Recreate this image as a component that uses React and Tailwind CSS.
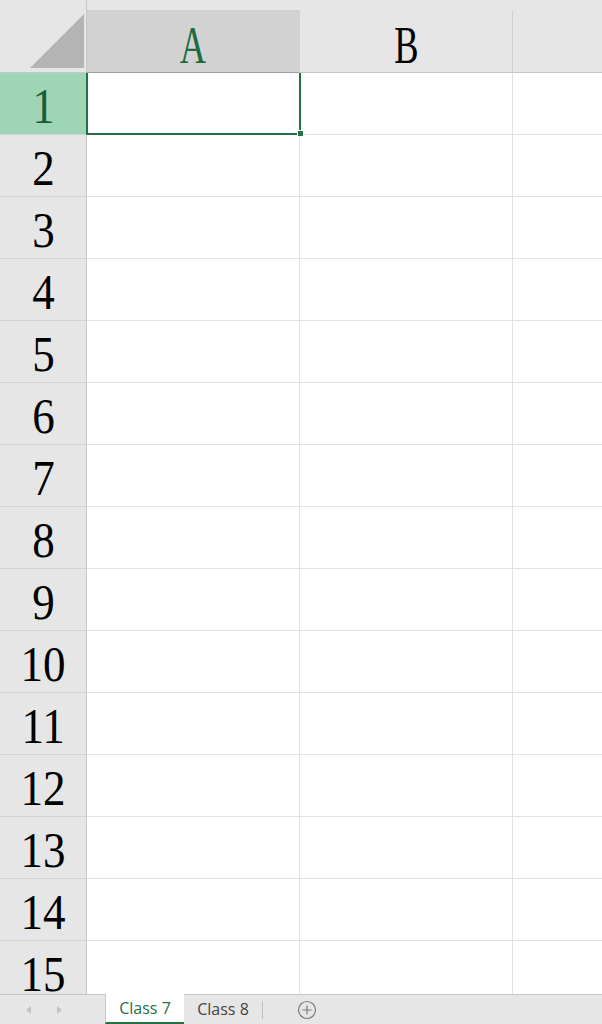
import React from 'react'

const ROWS = Array.from({ length: 15 }, (_, i) => i + 1)
const serif = { fontFamily: '"Liberation Serif", "Times New Roman", serif' }

function Corner() {
  return (
    <div className="w-[87px] h-full shrink-0 bg-[#e6e6e6] border-r border-[#c8c8c8] border-b border-b-[#c6c6c6]">
      <svg width="87" height="72" className="block">
        <polygon points="84,14 84,68 30,68" fill="#b4b4b4" />
      </svg>
    </div>
  )
}

function ColHeader({ label, active }) {
  return (
    <div className="w-[213px] shrink-0 flex flex-col">
      <div className="h-[10px] bg-[#e6e6e6]" />
      <div className={`flex-1 flex items-center justify-center border-r border-[#d0d0d0] border-b ${active ? 'bg-[#d2d2d2] border-b-[#9e9e9e] text-[#1d6b3f]' : 'bg-[#e6e6e6] border-b-[#c6c6c6] text-black'}`}>
        <span className="inline-block text-[52px] leading-none scale-x-70 translate-y-[5px]" style={serif}>{label}</span>
      </div>
    </div>
  )
}

function Row({ n }) {
  const active = n === 1
  return (
    <div className="flex h-[62px] shrink-0">
      <div className={`w-[87px] shrink-0 flex items-center justify-center border-r border-[#c8c8c8] border-b border-b-[#d4d4d4] ${active ? 'bg-[#9fd5b7] text-[#1d5c38]' : 'bg-[#e6e6e6] text-black'}`}>
        <span className="inline-block text-[50px] leading-none scale-x-90 translate-y-[2px]" style={serif}>{n}</span>
      </div>
      <div className="w-[213px] shrink-0 border-r border-b border-[#e1e1e1]" />
      <div className="w-[213px] shrink-0 border-r border-b border-[#e1e1e1]" />
      <div className="flex-1 border-b border-[#e1e1e1]" />
    </div>
  )
}

export default function App() {
  return (
    <div className="w-[602px] h-[1024px] overflow-hidden bg-white flex flex-col relative" style={{ fontFamily: '"Open Sans", "Noto Sans", sans-serif' }}>
      {/* column headers */}
      <div className="flex h-[73px] shrink-0 bg-[#e6e6e6]">
        <Corner />
        <ColHeader label="A" active />
        <ColHeader label="B" />
        <div className="flex-1 flex flex-col">
          <div className="h-[10px]" />
          <div className="flex-1 border-b border-[#c6c6c6]" />
        </div>
      </div>

      {/* grid */}
      <div className="flex-1 overflow-hidden relative flex flex-col">
        {ROWS.map(n => <Row key={n} n={n} />)}

        {/* selection A1 */}
        <div className="absolute left-[86px] top-[-2px] w-[215px] h-[64px] border-2 border-[#217346]" />
        <div className="absolute left-[297px] top-[57px] w-[7px] h-[7px] bg-[#217346] border border-white" />
      </div>

      {/* sheet tabs */}
      <div className="h-[30px] shrink-0 flex items-stretch bg-[#e6e6e6] border-t border-[#c6c6c6]">
        <div className="w-[105px] shrink-0 flex items-center gap-[22px] pl-[25px]">
          <svg width="8" height="10"><polygon points="6,1 6,9 1,5" fill="#c3c3c3" /></svg>
          <svg width="8" height="10"><polygon points="2,1 2,9 7,5" fill="#c3c3c3" /></svg>
        </div>
        <div className="w-[79px] shrink-0 bg-white border-l border-[#c6c6c6] border-b-2 border-b-[#217346] flex items-center justify-center text-[16px] text-[#217346] -mt-px pb-px">
          Class 7
        </div>
        <div className="w-[78px] shrink-0 flex items-center justify-center text-[16px] text-[#444] pb-[2px]">
          Class 8
        </div>
        <div className="flex items-center">
          <div className="w-px h-[18px] bg-[#c0c0c0]" />
        </div>
        <div className="w-[88px] flex items-center justify-center">
          <svg width="20" height="20" viewBox="0 0 20 20">
            <circle cx="10" cy="10" r="8.5" fill="none" stroke="#7a7a7a" strokeWidth="1.2" />
            <path d="M10 5.5v9M5.5 10h9" stroke="#7a7a7a" strokeWidth="1.2" />
          </svg>
        </div>
      </div>
    </div>
  )
}
